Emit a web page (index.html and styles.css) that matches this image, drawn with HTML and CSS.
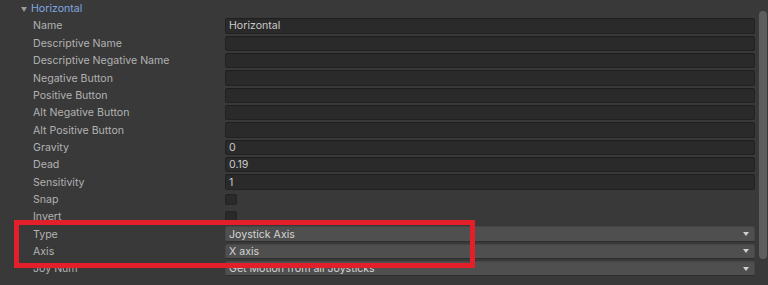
FILE: index.html
```html
<!DOCTYPE html>
<html>
<head>
<meta charset="utf-8">
<link rel="stylesheet" href="styles.css">
</head>
<body>
<div class="window">
  <div class="inspector">
    <div class="foldout">
      <span class="tri-down"></span><span class="title open">Horizontal</span>
    </div>
    <div class="props">
      <div class="row"><span class="label">Name</span><div class="field text">Horizontal</div></div>
      <div class="row"><span class="label">Descriptive Name</span><div class="field text"></div></div>
      <div class="row"><span class="label">Descriptive Negative Name</span><div class="field text"></div></div>
      <div class="row"><span class="label">Negative Button</span><div class="field text"></div></div>
      <div class="row"><span class="label">Positive Button</span><div class="field text"></div></div>
      <div class="row"><span class="label">Alt Negative Button</span><div class="field text"></div></div>
      <div class="row"><span class="label">Alt Positive Button</span><div class="field text"></div></div>
      <div class="row"><span class="label">Gravity</span><div class="field text">0</div></div>
      <div class="row"><span class="label">Dead</span><div class="field text">0.19</div></div>
      <div class="row"><span class="label">Sensitivity</span><div class="field text">1</div></div>
      <div class="row"><span class="label">Snap</span><div class="check"></div></div>
      <div class="row"><span class="label">Invert</span><div class="check"></div></div>
      <div class="row"><span class="label">Type</span><div class="field popup"><span>Joystick Axis</span><span class="arrow"></span></div></div>
      <div class="row"><span class="label">Axis</span><div class="field popup"><span>X axis</span><span class="arrow"></span></div></div>
      <div class="row"><span class="label">Joy Num</span><div class="field popup"><span>Get Motion from all Joysticks</span><span class="arrow"></span></div></div>
    </div>
    <div class="foldout">
      <span class="tri-right"></span><span class="title">Vertical</span>
    </div>
  </div>
  <div class="scrollbar"><div class="thumb"></div></div>
</div>
<div class="highlight"></div>
</body>
</html>
```
FILE: styles.css
```css
html, body {
  margin: 0;
  padding: 0;
  width: 768px;
  height: 285px;
  overflow: hidden;
  background: #393939;
  font-family: Inter, "Noto Sans", "DejaVu Sans", sans-serif;
  font-size: 10.6px;
}

.window {
  display: flex;
  height: 285px;
}

.inspector {
  flex: 1;
  display: flex;
  flex-direction: column;
}

.foldout {
  height: 17.3px;
  display: flex;
  align-items: center;
  padding-left: 21px;
  flex-shrink: 0;
}

.tri-down {
  width: 0;
  height: 0;
  border-left: 3.5px solid transparent;
  border-right: 3.5px solid transparent;
  border-top: 5px solid #9a9a9a;
  margin-right: 4px;
  margin-top: 1px;
}

.tri-right {
  width: 0;
  height: 0;
  border-top: 3.5px solid transparent;
  border-bottom: 3.5px solid transparent;
  border-left: 5px solid #9a9a9a;
  margin-right: 6px;
  margin-top: 14px;
}

.title {
  color: #bdbdbd;
}

.title.open {
  color: #7ea8e2;
}

.foldout:last-child .title {
  margin-top: 14px;
}

.props {
  display: flex;
  flex-direction: column;
}

.row {
  height: 17.35px;
  display: flex;
  align-items: center;
  padding-left: 33px;
  flex-shrink: 0;
}

.label {
  width: 192px;
  flex-shrink: 0;
  color: #b2b2b2;
  white-space: nowrap;
}

.field {
  flex: 1;
  height: 15.4px;
  box-sizing: border-box;
  border-radius: 2.5px;
  display: flex;
  align-items: center;
  padding-left: 3px;
  white-space: nowrap;
}

.field.text {
  background: #2a2a2a;
  border: 1px solid #222222;
  border-top-color: #1e1e1e;
  color: #c9c9c9;
}

.field.popup {
  background: #4f4f4f;
  border: 1px solid #464646;
  border-bottom-color: #2e2e2e;
  color: #d4d4d4;
  justify-content: space-between;
  padding-right: 5px;
}

.arrow {
  width: 0;
  height: 0;
  border-left: 3.5px solid transparent;
  border-right: 3.5px solid transparent;
  border-top: 4px solid #cfcfcf;
}

.check {
  width: 11.5px;
  height: 11px;
  box-sizing: border-box;
  background: #2a2a2a;
  border: 1px solid #222222;
  border-radius: 2px;
}

.scrollbar {
  width: 13px;
  flex-shrink: 0;
  padding: 11px 1px 0 4px;
  box-sizing: border-box;
}

.thumb {
  width: 8px;
  height: 248px;
  background: #5e5e5e;
  border-radius: 4px;
}

.highlight {
  position: absolute;
  left: 14px;
  top: 220px;
  width: 461px;
  height: 48px;
  box-sizing: border-box;
  border: 5px solid #e3202a;
}
```
